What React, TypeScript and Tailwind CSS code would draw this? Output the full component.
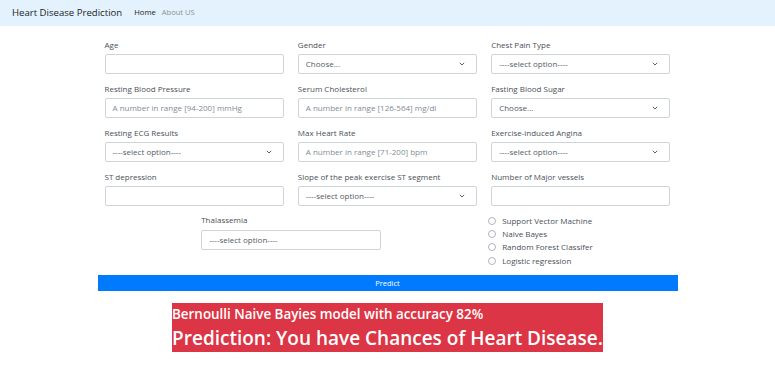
import React from "react";

const font = { fontFamily: '"Open Sans", "Noto Sans", sans-serif' };

function Chevron() {
  return (
    <svg width="6" height="4" viewBox="0 0 6 4" className="absolute right-[11px] top-1/2 -translate-y-1/2">
      <path d="M0.8 0.8 L3 3 L5.2 0.8" fill="none" stroke="#5a6268" strokeWidth="1" />
    </svg>
  );
}

function Label({ children }: { children: React.ReactNode }) {
  return <div className="h-[12px] leading-[12px] text-[8px] text-[#4a5057] mb-[3px] whitespace-nowrap">{children}</div>;
}

function TextInput({ placeholder }: { placeholder?: string }) {
  return (
    <div className="h-[20px] border border-[#ced4da] rounded-[2px] bg-white flex items-center px-[7px] text-[8px] text-[#848c94] whitespace-nowrap">
      {placeholder}
    </div>
  );
}

function Select({ value }: { value: string }) {
  return (
    <div className="relative h-[20px] border border-[#ced4da] rounded-[2px] bg-white flex items-center px-[7px] text-[8px] text-[#555c63] whitespace-nowrap">
      {value}
      <Chevron />
    </div>
  );
}

function Field({ label, children }: { label: string; children: React.ReactNode }) {
  return (
    <div className="px-[7px] mb-[9px]">
      <Label>{label}</Label>
      {children}
    </div>
  );
}

const SEL = "----select option----";

export default function App() {
  return (
    <div className="w-[775px] h-[373px] bg-white" style={font}>
      <nav className="h-[26px] bg-[#e3f2fd] flex items-center px-[12px]">
        <span className="text-[9.6px] text-[#212529] mr-[12px]">Heart Disease Prediction</span>
        <span className="text-[7.6px] text-[#212529] mr-[6px]">Home</span>
        <span className="text-[7.6px] text-[#8a9297]">About US</span>
      </nav>
      <div className="w-[580px] mx-auto pt-[13px]">
        <div className="grid grid-cols-3">
          <Field label="Age"><TextInput /></Field>
          <Field label="Gender"><Select value="Choose..." /></Field>
          <Field label="Chest Pain Type"><Select value={SEL} /></Field>
          <Field label="Resting Blood Pressure"><TextInput placeholder="A number in range [94-200] mmHg" /></Field>
          <Field label="Serum Cholesterol"><TextInput placeholder="A number in range [126-564] mg/dl" /></Field>
          <Field label="Fasting Blood Sugar"><Select value="Choose..." /></Field>
          <Field label="Resting ECG Results"><Select value={SEL} /></Field>
          <Field label="Max Heart Rate"><TextInput placeholder="A number in range [71-200] bpm" /></Field>
          <Field label="Exercise-induced Angina"><Select value={SEL} /></Field>
          <Field label="ST depression"><TextInput /></Field>
          <Field label="Slope of the peak exercise ST segment"><Select value={SEL} /></Field>
          <Field label="Number of Major vessels"><TextInput /></Field>
        </div>
        <div className="grid grid-cols-6 -mt-[1px]">
          <div className="col-start-2 col-span-2 px-[7px]">
            <div className="h-[12px] leading-[12px] text-[8px] text-[#4a5057] mb-[4px]">Thalassemia</div>
            <div className="h-[20px] border border-[#ced4da] rounded-[2px] bg-white flex items-center px-[7px] text-[8px] text-[#555c63]">{SEL}</div>
          </div>
          <div className="col-start-5 col-span-2 px-[4px]">
            {["Support Vector Machine", "Naive Bayes", "Random Forest Classifer", "Logistic regression"].map((t) => (
              <div key={t} className="h-[13.3px] flex items-center text-[8px] text-[#4a5057]">
                <span className="w-[8px] h-[8px] rounded-full border border-[#adb5bd] bg-white mr-[6px]" />
                {t}
              </div>
            ))}
          </div>
        </div>
        <div className="mt-[8px] h-[16px] bg-[#007bff] flex items-center justify-center text-white text-[7.5px]">Predict</div>
      </div>
      <div className="flex justify-center mt-[12px]">
        <div className="bg-[#dc3545] text-white font-semibold">
          <div className="text-[13.4px] leading-[20px] pt-[1px]">Bernoulli Naive Bayies model with accuracy 82%</div>
          <div className="text-[19px] leading-[28px]">Prediction: You have Chances of Heart Disease.</div>
        </div>
      </div>
    </div>
  );
}
